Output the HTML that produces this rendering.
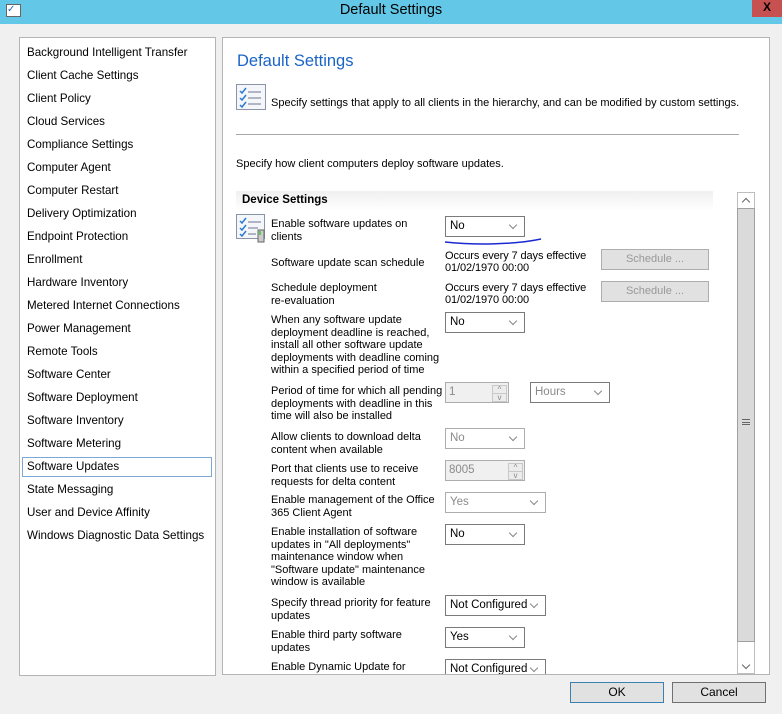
<!DOCTYPE html>
<html><head><style>
*{margin:0;padding:0;box-sizing:border-box}
body{width:782px;height:714px;background:#f0f0f0;position:relative;overflow:hidden;font-family:"Liberation Sans",sans-serif;font-size:11px;color:#000}
.a{position:absolute}
.title{left:0;top:0;width:782px;height:24px;background:#63c8e8}
.close{left:752px;top:0;width:30px;height:17px;background:#c75050;color:#000;font-weight:bold;font-size:12px;text-align:center;line-height:15px}
.panel{background:#fff;border:1px solid #b4b4b4}
.li{left:27px;font-size:11.6px}
.lab{left:271px;line-height:12.5px;width:175px}
.dd{border:1px solid #7a7a7a;background:#fff;height:21px;padding:3px 4px;font-size:11.5px}
.dd.dis{border-color:#adadad;color:#8a8a8a}
.dd::after{content:"";position:absolute;right:8px;top:5px;width:5px;height:5px;border-right:1.5px solid #888;border-bottom:1.5px solid #888;transform:rotate(45deg)}
.btn{border:1px solid #adadad;background:#e1e1e1;color:#999;text-align:center;font-size:11px;line-height:19px;height:21px;width:108px;left:601px}
.spin{border:1px solid #adadad;background:#f0f0f0;height:21px;padding:3px 3px;color:#8a8a8a;font-size:11.5px}
.spin i{position:absolute;right:1px;width:15px;height:9px;border:1px solid #c8c8c8;background:#ececec;font-style:normal;font-size:8px;line-height:7px;text-align:center;color:#888}
.val{left:445px;line-height:12px;font-size:11px;letter-spacing:-0.1px}
</style></head><body>
<div class="a title"></div>
<div class="a" style="left:6px;top:4px;width:15px;height:13px;border:1px solid #666;background:#fff;font-size:10px;color:#2a6ab5;line-height:10px">✓</div>
<div class="a" style="left:0;top:2px;width:782px;text-align:center;font-size:14.5px">Default Settings</div>
<div class="a close">X</div>

<div class="a panel" style="left:19px;top:37px;width:197px;height:639px"></div>
<div class="a li" style="top:46px">Background Intelligent Transfer</div>
<div class="a li" style="top:69px">Client Cache Settings</div>
<div class="a li" style="top:92px">Client Policy</div>
<div class="a li" style="top:115px">Cloud Services</div>
<div class="a li" style="top:138px">Compliance Settings</div>
<div class="a li" style="top:161px">Computer Agent</div>
<div class="a li" style="top:184px">Computer Restart</div>
<div class="a li" style="top:207px">Delivery Optimization</div>
<div class="a li" style="top:230px">Endpoint Protection</div>
<div class="a li" style="top:253px">Enrollment</div>
<div class="a li" style="top:276px">Hardware Inventory</div>
<div class="a li" style="top:299px">Metered Internet Connections</div>
<div class="a li" style="top:322px">Power Management</div>
<div class="a li" style="top:345px">Remote Tools</div>
<div class="a li" style="top:368px">Software Center</div>
<div class="a li" style="top:391px">Software Deployment</div>
<div class="a li" style="top:414px">Software Inventory</div>
<div class="a li" style="top:437px">Software Metering</div>
<div class="a" style="left:22px;top:457px;width:190px;height:20px;border:1px solid #7aa8d8"></div>
<div class="a li" style="top:460px">Software Updates</div>
<div class="a li" style="top:483px">State Messaging</div>
<div class="a li" style="top:506px">User and Device Affinity</div>
<div class="a li" style="top:529px">Windows Diagnostic Data Settings</div>

<div class="a panel" style="left:222px;top:37px;width:548px;height:638px"></div>
<div class="a" style="left:237px;top:52px;font-size:16.5px;color:#1a64c8">Default Settings</div>
<svg class="a" style="left:236px;top:84px" width="31" height="27"><rect x="0.5" y="0.5" width="29" height="25" fill="#f4f6fa" stroke="#8a94a8"/><path d="M4 7l2 2 4-5M4 14l2 2 4-5M4 21l2 2 4-5" stroke="#2a7ad0" stroke-width="1.5" fill="none"/><path d="M12 8h13M12 14h13M12 20h13" stroke="#6a7490"/></svg>
<div class="a" style="left:271px;top:97px">Specify settings that apply to all clients in the hierarchy, and can be modified by custom settings.</div>
<div class="a" style="left:236px;top:134px;width:503px;height:1px;background:#a8a8a8"></div>
<div class="a" style="left:236px;top:158px">Specify how client computers deploy software updates.</div>
<div class="a" style="left:236px;top:191px;width:477px;height:20px;background:linear-gradient(#f0f0f0,#fff)"></div>
<div class="a" style="left:242px;top:194px;font-weight:bold;font-size:11.5px">Device Settings</div>
<svg class="a" style="left:236px;top:214px" width="32" height="30"><rect x="0.5" y="0.5" width="28" height="24" fill="#f4f6fa" stroke="#8a94a8"/><path d="M4 7l2 2 4-5M4 14l2 2 4-5M4 20l2 2 4-5" stroke="#2a7ad0" stroke-width="1.5" fill="none"/><path d="M12 8h13M12 14h10M12 20h8" stroke="#6a7490"/><rect x="22" y="16" width="6" height="12" fill="#ccc" stroke="#666"/><rect x="23" y="17" width="2" height="4" fill="#5c5"/></svg>

<div class="a lab" style="top:218px">Enable software updates on<br>clients</div>
<div class="a dd" style="left:445px;top:216px;width:80px">No</div>
<svg class="a" style="left:443px;top:236px" width="100" height="10"><path d="M2 6C30 9 70 9 98 3" stroke="#1a2ad0" stroke-width="1.5" fill="none"/></svg>

<div class="a lab" style="top:257px">Software update scan schedule</div>
<div class="a val" style="top:250px">Occurs every 7 days effective<br>01/02/1970 00:00</div>
<div class="a btn" style="top:249px">Schedule ...</div>

<div class="a lab" style="top:282px">Schedule deployment<br>re-evaluation</div>
<div class="a val" style="top:282px">Occurs every 7 days effective<br>01/02/1970 00:00</div>
<div class="a btn" style="top:281px">Schedule ...</div>

<div class="a lab" style="top:314px">When any software update deployment deadline is reached, install all other software update deployments with deadline coming within a specified period of time</div>
<div class="a dd" style="left:445px;top:312px;width:80px">No</div>

<div class="a lab" style="top:385px">Period of time for which all pending deployments with deadline in this time will also be installed</div>
<div class="a spin" style="left:445px;top:382px;width:64px">1<i style="top:2px">^</i><i style="top:10px">v</i></div>
<div class="a dd dis" style="left:530px;top:382px;width:80px;border-color:#7a7a7a">Hours</div>

<div class="a lab" style="top:431px">Allow clients to download delta<br>content when available</div>
<div class="a dd dis" style="left:445px;top:428px;width:80px">No</div>

<div class="a lab" style="top:463px">Port that clients use to receive<br>requests for delta content</div>
<div class="a spin" style="left:445px;top:460px;width:80px">8005<i style="top:2px">^</i><i style="top:10px">v</i></div>

<div class="a lab" style="top:494px">Enable management of the Office<br>365 Client Agent</div>
<div class="a dd dis" style="left:445px;top:492px;width:101px">Yes</div>

<div class="a lab" style="top:526px">Enable installation of software updates in "All deployments" maintenance window when "Software update" maintenance window is available</div>
<div class="a dd" style="left:445px;top:524px;width:80px">No</div>

<div class="a lab" style="top:597px">Specify thread priority for feature<br>updates</div>
<div class="a dd" style="left:445px;top:595px;width:101px">Not Configured</div>

<div class="a lab" style="top:629px">Enable third party software<br>updates</div>
<div class="a dd" style="left:445px;top:627px;width:80px">Yes</div>

<div class="a lab" style="top:661px">Enable Dynamic Update for</div>
<div class="a" style="left:445px;top:659px;width:101px;height:15px;overflow:hidden"><div class="dd" style="position:relative;width:101px">Not Configured</div></div>

<div class="a" style="left:737px;top:192px;width:18px;height:482px;border:1px solid #bdbdbd;background:#fff"></div>
<div class="a" style="left:737px;top:208px;width:18px;height:434px;background:#dadada;border:1px solid #a0a0a0"></div>
<div class="a" style="left:743px;top:199px;width:6px;height:6px;border-left:1px solid #666;border-top:1px solid #666;transform:rotate(45deg)"></div>
<div class="a" style="left:742px;top:419px;width:8px;height:6px;border-top:1px solid #666;border-bottom:1px solid #666"></div>
<div class="a" style="left:742px;top:422px;width:8px;height:1px;background:#666"></div>
<div class="a" style="left:743px;top:662px;width:6px;height:6px;border-right:1px solid #666;border-bottom:1px solid #666;transform:rotate(45deg)"></div>

<div class="a" style="left:570px;top:682px;width:94px;height:21px;border:1px solid #3c7fb1;background:#e1e1e1;text-align:center;line-height:19px;font-size:12px">OK</div>
<div class="a" style="left:672px;top:682px;width:94px;height:21px;border:1px solid #707070;background:#e1e1e1;text-align:center;line-height:19px;font-size:12px">Cancel</div>
</body></html>
